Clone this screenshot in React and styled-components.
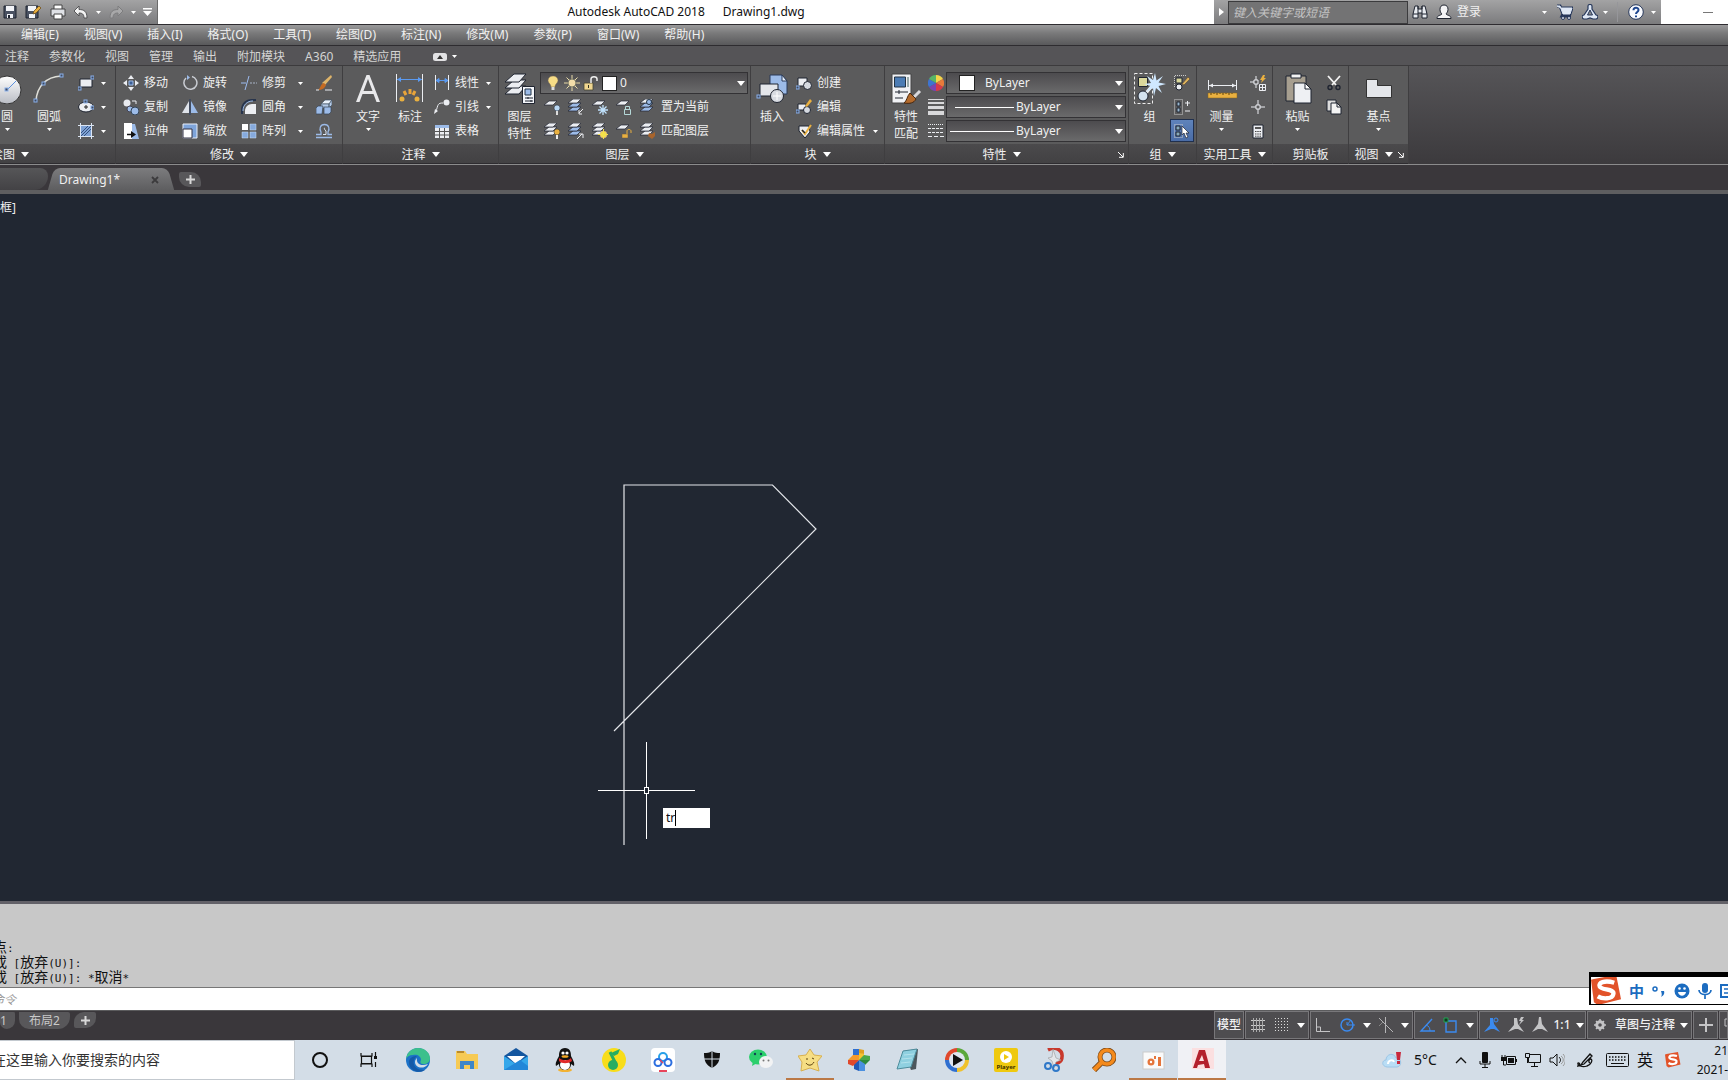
import React, { useState } from 'react';
import styled, { createGlobalStyle, css } from 'styled-components';

const GlobalStyle = createGlobalStyle`
  * { box-sizing: border-box; }
  body {
    margin: 0;
    overflow: hidden;
    background: #3a373b;
    font-family: "Noto Sans", "Noto Sans CJK SC", sans-serif;
    font-size: 12px;
    line-height: 16px;
    color: #f0f0f0;
  }
  button, input, select {
    font: inherit;
    color: inherit;
    margin: 0;
    padding: 0;
    border: 0;
    background: none;
    border-radius: 0;
    outline: none;
  }
  svg { display: block; flex: none; }
`;

const Shell = styled.div`
  height: 100vh;
  display: flex;
  flex-direction: column;
  overflow: hidden;
`;

/* ---------- title bar ---------- */

const TitleBar = styled.header`
  display: flex;
  height: 25px;
  flex: none;
  background: #fff;
  border-bottom: 1px solid #2e2c30;
`;
const silver = css`
  background: linear-gradient(#a3a3a4, #7b7b7d);
`;
const QuickAccess = styled.div`
  ${silver}
  width: 158px;
  display: flex;
  align-items: center;
  padding-left: 2px;
  border-right: 1px solid #6a6a6a;
`;
const QuickButton = styled.button`
  width: ${p => p.$w || 24}px;
  height: 24px;
  display: flex;
  align-items: center;
  justify-content: center;
`;
const WindowTitle = styled.h1`
  flex: 1;
  margin: 0;
  display: flex;
  justify-content: center;
  align-items: center;
  gap: 18px;
  color: #111;
  font-size: 12px;
  font-weight: 400;
`;
const InfoCenter = styled.div`
  ${silver}
  width: 447px;
  display: flex;
  align-items: center;
`;
const SearchBox = styled.input`
  width: 180px;
  height: 23px;
  padding-left: 4px;
  background: #737374;
  border: 1px solid #3b3b3d;
  font-style: italic;
  &::placeholder { color: #c4c4c4; }
`;
const SignIn = styled.button`
  flex: 1;
  display: flex;
  align-items: center;
  gap: 5px;
  padding-left: 4px;
  span { margin-right: auto; }
`;
const Divider = styled.span`
  width: 1px;
  height: 20px;
  margin: 0 9px 0 4px;
  background: #96969a;
`;
const MinimizeArea = styled.div`
  width: 67px;
  display: flex;
  align-items: center;
  justify-content: center;
  padding-left: 26px;
`;

/* ---------- menus ---------- */

const MenuBar = styled.nav`
  display: flex;
  align-items: center;
  gap: 25px;
  height: 21px;
  flex: none;
  padding-left: 21px;
  background: linear-gradient(#9a9a9b, #7a7a7b 40%, #59595b);
  border-bottom: 1px solid #2e2c30;
`;
const RibbonTabs = styled.nav`
  display: flex;
  align-items: center;
  gap: 20px;
  height: 20px;
  flex: none;
  padding: 2px 0 0 5px;
  background: #555457;
  border-bottom: 1px solid #3c3b3d;
  color: #d4d4d4;
`;
const TabToggle = styled.button`
  display: flex;
  align-items: center;
  gap: 5px;
  margin-left: 12px;
`;

/* ---------- ribbon ---------- */

const Ribbon = styled.section`
  display: flex;
  height: 99px;
  flex: none;
  background: linear-gradient(#565558, #3c3a3d);
  border-bottom: 1px solid #8b8b8c;
`;
const PanelBox = styled.section`
  width: ${p => p.$w}px;
  flex: none;
  display: flex;
  flex-direction: column;
  overflow: hidden;
  border-right: 1px solid #3f3e40;
  background: #5b5b5c;
`;
const PanelBody = styled.div`
  display: flex;
  height: 78px;
  flex: none;
  padding: 5px ${p => p.$pr || 0}px 0 ${p => p.$pl || 0}px;
  justify-content: ${p => (p.$end ? 'flex-end' : 'flex-start')};
`;
const PanelTitle = styled.div`
  display: flex;
  align-items: center;
  height: 20px;
  padding-top: 2px;
  background: linear-gradient(#4b4a4c, #424143);
  border-bottom: 1px solid #2e2c30;
`;
const TitleButton = styled.button`
  flex: 1;
  min-width: 0;
  display: flex;
  align-items: center;
  justify-content: ${p => (p.$end ? 'flex-end' : 'center')};
  gap: 6px;
  padding-right: ${p => (p.$end ? 86 : 0)}px;
  white-space: nowrap;
`;
const Launcher = styled.button`
  width: 10px;
  height: 16px;
`;
const BigBox = styled.button`
  width: ${p => p.$w || 42}px;
  height: 72px;
  flex: none;
  display: flex;
  flex-direction: column;
  align-items: center;
  padding-top: 1px;
  svg:first-child { margin-bottom: 4px; }
  span { line-height: 17px; }
  svg:last-child { margin-top: 3px; }
`;
const ToolGrid = styled.div`
  display: grid;
  grid-template-columns: ${p => p.$cols};
  grid-auto-rows: 24px;
  margin-left: ${p => p.$ml || 0}px;
`;
const ToolBox = styled.button`
  display: flex;
  align-items: center;
  gap: 5px;
  white-space: nowrap;
  svg:nth-last-child(1):not(:first-child) { margin-left: auto; }
`;
const IconBox = styled.button`
  width: 24px;
  height: ${p => (p.$on ? 23 : 24)}px;
  display: flex;
  align-items: center;
  justify-content: center;
  ${p => p.$on && css`
    background: linear-gradient(#5f83bb, #4a6ca6);
    border: 1px solid #20304e;
  `}
`;
const Stack = styled.div`
  width: ${p => p.$w}px;
  flex: none;
  display: flex;
  flex-direction: column;
`;
const LayerRow = styled.div`
  display: flex;
  align-items: center;
  height: 24px;
  gap: 8px;
  padding-left: 4px;
`;
const Combo = styled.label`
  display: flex;
  align-items: center;
  gap: ${p => p.$gap || 4}px;
  height: 22px;
  margin: 1px 0;
  padding: 0 2px 0 ${p => p.$pl || 8}px;
  background: linear-gradient(#4c4b4e, #6a6a6b);
  border: 1px solid #333235;
  select {
    flex: 1;
    min-width: 0;
    appearance: none;
  }
  option { color: #111; }
`;
const Swatch = styled.span`
  width: ${p => p.$s}px;
  height: ${p => p.$s}px;
  margin-right: ${p => p.$mr || 0}px;
  background: #fff;
  border: 1px solid #222;
`;
const LineSample = styled.span`
  width: ${p => p.$w}px;
  height: 1px;
  background: #fff;
`;

/* ---------- drawing files + canvas ---------- */

const FileTabs = styled.nav`
  display: flex;
  align-items: flex-end;
  height: 29px;
  flex: none;
  background: #3a373b;
  border-bottom: 4px solid #5e5e60;
`;
const PlainTab = styled.div`
  width: 48px;
  height: 22px;
  background: linear-gradient(#565658, #434245);
  border-radius: 0 8px 14px 0;
`;
const FileTab = styled.div`
  position: relative;
  z-index: 0;
  width: 127px;
  height: 22px;
  display: flex;
  align-items: center;
  justify-content: space-between;
  padding: 2px 16px 0 11px;
  &::before, &::after {
    content: "";
    position: absolute;
    z-index: -1;
    top: 0;
    bottom: 0;
    background: linear-gradient(#7c7c7e, #5e5e60);
  }
  &::before { left: 3px; right: 30px; transform: skewX(-16deg); border-radius: 6px 0 0 0; }
  &::after { right: 4px; left: 30px; transform: skewX(16deg); border-radius: 0 6px 0 0; }
`;
const AddTab = styled.button`
  width: 22px;
  height: ${p => p.$h || 15}px;
  margin: ${p => p.$m || '0'};
  display: flex;
  align-items: center;
  justify-content: center;
  background: #58575a;
  border-radius: ${p => p.$r};
`;
const Canvas = styled.main`
  position: relative;
  flex: 1;
  min-height: 0;
  background: #212732;
  overflow: hidden;
`;
const ViewLabel = styled.button`
  position: absolute;
  top: 6px;
  left: 0;
`;
const Drawing = styled.svg`
  width: 100%;
  height: 100%;
`;
const DynamicInput = styled.label`
  position: absolute;
  left: 663px;
  top: 614px;
  width: 47px;
  height: 20px;
  display: flex;
  align-items: center;
  padding-left: 3px;
  background: #fff;
  color: #111;
  input { width: 9px; }
`;
const Caret = styled.span`
  width: 1px;
  height: 16px;
  background: #000;
`;

/* ---------- command line ---------- */

const CommandArea = styled.section`
  flex: none;
  border-top: 3px solid #626168;
  background: #c8c8c8;
  color: #111;
  overflow: hidden;
`;
const History = styled.div`
  height: 83px;
  display: flex;
  flex-direction: column;
  justify-content: flex-end;
  padding-bottom: 2px;
  margin-left: -7px;
  font-family: "DejaVu Sans Mono", "Noto Sans CJK SC", monospace;
  font-size: 11px;
  line-height: 15px;
  p { margin: 0; height: 15px; white-space: pre; }
  b { font-size: 14px; font-weight: 400; }
`;
const CommandInput = styled.input`
  display: block;
  width: 100%;
  height: 23px;
  margin-left: -8px;
  background: #fff;
  border-top: 1px solid #777;
  box-shadow: 8px 0 0 #fff;
  font-style: italic;
  &::placeholder { color: #999; }
`;
const ImeBar = styled.div`
  position: absolute;
  right: 0;
  bottom: 75px;
  width: 139px;
  height: 33px;
  display: flex;
  align-items: center;
  gap: 7px;
  overflow: hidden;
  background: #fff;
  border: solid #000;
  border-width: 5px 0 1px 2px;
  color: #1c6cc0;
  button { flex: none; }
`;
const ImeMode = styled.button`
  font-size: 15px;
  font-weight: 700;
`;

/* ---------- status bar ---------- */

const StatusBar = styled.footer`
  display: flex;
  justify-content: space-between;
  height: 30px;
  flex: none;
  background: #3a373b;
  border-top: 1px solid #5b5b5d;
`;
const LayoutTabs = styled.nav`
  display: flex;
  padding-top: 1px;
  color: #c9c9c9;
`;
const LayoutTab = styled.button`
  width: ${p => p.$w}px;
  height: 17px;
  margin-right: 4px;
  text-align: ${p => p.$align || 'center'};
  background: #58575a;
  border-radius: 0 2px 12px 10px;
`;
const StatusTools = styled.div`
  display: flex;
  gap: 1px;
  height: 28px;
`;
const StatusGroup = styled.div`
  display: flex;
  align-items: center;
  width: ${p => p.$w}px;
  background: #4e4d50;
  border: 1px solid #78777a;
  overflow: hidden;
`;
const StatusButton = styled.button`
  width: ${p => p.$w || 24}px;
  height: 25px;
  flex: none;
  display: flex;
  align-items: center;
  justify-content: center;
  gap: 5px;
  white-space: nowrap;
  font-weight: ${p => (p.$strong ? 500 : 400)};
`;

/* ---------- windows taskbar ---------- */

const Taskbar = styled.footer`
  display: flex;
  height: 40px;
  flex: none;
  background: #d3dde7;
  color: #111;
`;
const TaskSearch = styled.input`
  width: 303px;
  margin-left: -8px;
  background: #fff;
  border: 1px solid #c3c9cf;
  border-left: 0;
  font-size: 14px;
  &::placeholder { color: #333; }
`;
const TaskApps = styled.div`
  display: flex;
  flex: 1;
  gap: 1px;
  padding-left: 1px;
`;
const TaskApp = styled.button`
  width: 48px;
  height: 40px;
  padding-top: ${p => (p.$open ? 2 : 0)}px;
  display: flex;
  align-items: center;
  justify-content: center;
  background: ${p => (p.$active ? '#f0f1f5' : 'none')};
  border-bottom: ${p => (p.$open ? '2px solid #bb7845' : '0')};
`;
const Tray = styled.div`
  display: flex;
  align-items: center;
`;
const Weather = styled.button`
  display: flex;
  align-items: center;
  gap: 10px;
  width: 67px;
  font-size: 14px;
`;
const TrayButton = styled.button`
  width: ${p => p.$w || 24}px;
  height: 40px;
  display: flex;
  align-items: center;
  justify-content: center;
  font-size: 16px;
`;
const Clock = styled.time`
  width: 40px;
  font-size: 12px;
  line-height: 19px;
  text-align: right;
  span { display: block; }
`;

/* ---------- icons ---------- */

const W = '#eceef2';
const B = '#9cbbe8';
const K = '#1f2430';
const Y = '#e9b040';

const S = ({ s = 16, w, h, box, children, ...rest }) => (
  <svg width={w || s} height={h || s} viewBox={box || `0 0 ${w || s} ${h || s}`} fill="none" aria-hidden="true" {...rest}>
    {children}
  </svg>
);

const Down = ({ big }) => (big
  ? <S w={8} h={5}><path d="M0 0h8L4 5z" fill="#fff" /></S>
  : <S w={5} h={3}><path d="M0 0h5L2.500 3z" fill="#fff" /></S>);

const Plus = () => <S s={9}><path d="M4.500 0v9M0 4.500h9" stroke="#d8d8d8" strokeWidth="2" /></S>;

const Grip = ({ x, y }) => <rect x={x} y={y} width="3" height="3" fill="#3f4a60" stroke="#8ab0ea" />;

const LayerIcon = ({ n = 3, blue, children }) => (
  <S>
    {(n === 3 ? [8, 4, 0] : [2]).map((y, i) => (
      <path key={y} d={`M5 ${y}h8l-4 4H0z`} fill={blue && i < 2 ? B : W} stroke={K} strokeWidth=".7" />
    ))}
    {children}
  </S>
);

const icons = {
  /* quick access */
  save: <S><path d="M2 2h12v12H2z" fill="#4a5262" stroke={K} /><path d="M4 2h8v5H4zM5 10h6v4H5z" fill="#f2f4f8" /><path d="M6 11h2v3H6z" fill={K} /></S>,
  saveAs: <S><path d="M1 2h12v12H1z" fill="#4a5262" stroke={K} /><path d="M3 2h8v5H3zM4 10h6v4H4z" fill="#f2f4f8" /><path d="M8 10l1-3 5-5 2 2-5 5z" fill={Y} stroke="#70501c" strokeWidth=".8" /></S>,
  print: <S><path d="M4 1h8v5H4z" fill="#fff" stroke="#444" /><path d="M1 5h14v7H1z" fill="#dfe1e6" stroke="#444" /><path d="M4 10h8v5H4z" fill="#fff" stroke="#444" /></S>,
  undo: <S><path d="M6 2v3.500c5 0 8 2 8 8.500h-3c0-4-2-5-5-5v3L1 7z" fill="#f3f3f3" stroke="#4b4b4d" strokeWidth=".9" /></S>,
  redo: <S><path d="M10 2v3.500c-5 0-8 2-8 8.500h3c0-4 2-5 5-5v3l5-5z" fill="#a8a8a9" stroke="#7c7c7e" /></S>,
  more: <S w={9} h={8}><path d="M0 0h9v1.500H0zM0 3h9L4.500 8z" fill="#fff" /></S>,
  play: <S w={5} h={8}><path d="M0 0v8l5-4z" fill="#fff" /></S>,
  binoculars: <S><path d="M3 2h3v3h4V2h3l2 8v4h-5V9H6v5H1v-4z" fill="#e8ebf0" stroke={K} /><path d="M6 2v7M10 2v7M1 10h5M10 10h5" stroke={K} /></S>,
  user: <S><path d="M8 1c3 0 4 2 4 4.500S10.500 9 10 10c1 1.500 5 1 5 4.500H1C1 11 5 11.500 6 10 5 9 4 8 4 5.500S5 1 8 1z" fill="#f3f3f5" stroke={K} /></S>,
  cart: <S><path d="M0 2h3l3 8h7l2-6H4M6 10l-1 2h9" stroke="#26375a" strokeWidth="3" /><path d="M0 2h3l3 8h7l2-6H4z" fill="#dfe8f5" stroke="#dfe8f5" /><circle cx="6" cy="14" r="1.500" fill="#dfe8f5" stroke="#26375a" /><circle cx="12" cy="14" r="1.500" fill="#dfe8f5" stroke="#26375a" /></S>,
  exchange: <S><path d="M6 2c0-2 4-2 4 0v3l4 6c3 0 2 4 0 4h-3l-3-1-3 1H2c-2 0-3-4 0-4l4-6z" fill="#dfe8f5" stroke="#26375a" strokeWidth="1.200" /><path d="M8 6l2.500 5h-5z" fill="#888" stroke="#26375a" /></S>,
  help: <S><circle cx="8" cy="8" r="7.300" fill="#fbfcff" stroke="#26375a" /><path d="M5.500 6.200C5.500 3 10.500 3 10.500 6c0 2-2.500 2-2.500 4M8 11.500v1.800" stroke="#1e4690" strokeWidth="2" /></S>,
  tabs: <S w={14} h={8}><rect width="14" height="8" rx="2.500" fill="#e2e2e4" /><path d="M7 2l3 4H4z" fill="#333" /></S>,

  /* big ribbon icons */
  circle: <S s={32}><circle cx="16" cy="18" r="14" fill="url(#sphere)" stroke="#333" /><path d="M16 18l9-9" stroke="#5b8fdc" /><Grip x="14" y="16" /></S>,
  arc: <S s={32}><path d="M3 29C4 14 13 5 28 4" stroke="#dfdfd8" strokeWidth="1.500" /><Grip x="1" y="27" /><Grip x="9" y="10" /><Grip x="27" y="2" /></S>,
  text: <S s={32}><path d="M4 30L14.500 3h3L28 30h-3.500l-3-8h-11l-3 8zM11.500 19h9L16 7z" fill="#e9e9eb" /></S>,
  dim: <S s={32}><path d="M2.500 2v28M28.500 2v28" stroke={W} /><path d="M3 7.500h25" stroke="#5b9af0" /><path d="M3 7.500l4-2.500v5zM28 7.500L24 5v5z" fill="#5b9af0" /><path d="M16 17v5M10 19l2 4M21 19l-2 4" stroke="#e8a43a" strokeWidth="3" /><circle cx="8" cy="27" r="2.500" fill={Y} /><circle cx="23" cy="27" r="2.500" fill={Y} /></S>,
  layers: <S s={32}>{[14, 8, 2].map(y => <path key={y} d={`M10 ${y}h12l-7 8H1z`} fill={W} stroke={K} />)}<path d="M18.500 14.500h12v17h-12z" fill="#f4f6fa" stroke={K} /><path d="M21 17h6v6h-6z" fill={B} stroke="#234" /><path d="M21 26h8M21 29h8M24 25v2M27 28v2" stroke={K} /></S>,
  insert: <S s={32}><path d="M14 3h12l5 6v13H14z" fill={B} stroke="#2b3b58" /><path d="M26 3v6h5z" fill="#e6effb" stroke="#2b3b58" /><path d="M4 12h18v12H4z" fill="#e4e6ea" stroke={K} /><circle cx="21" cy="24" r="6.500" fill="#d9dce2" stroke={K} /><path d="M17 24h8M21 20v8" stroke="#fff" /><Grip x="1" y="23" /></S>,
  match: <S s={32}><path d="M2 2h19v29H2z" fill="#f1f2f5" stroke="#444" /><path d="M4.500 5h11v10h-11z" fill="#4c7cb4" stroke="#234" /><path d="M17 5h2v10h-2z" fill="#9aa" /><path d="M5 20h13M5 26h8M9 18v4" stroke={K} /><path d="M30 19l-6 6" stroke="#d9d9dc" strokeWidth="3" /><path d="M20 21l6 6c-2 4-6 5-12 4 3-2 3-7 6-10z" fill="#b36a2c" stroke="#4b2a10" /></S>,
  group: <S s={32}><path d="M.5 1.500h18v30H.5z" stroke="#eee" strokeDasharray="3 2" /><path d="M4.500 5.500h9v9h-9z" fill="#dad79a" stroke={K} /><path d="M12 21l6-7" stroke="#eee" strokeWidth="3" /><circle cx="9" cy="24" r="5" fill="#d4e2ee" stroke={K} /><path d="M21 1l1.500 7.500L29 4l-4.500 6.500L32 12l-7.500 2 3.500 7-6-5-2 8-1-8-7 4 4.500-6L10 12l7-1-4-7 6 4z" fill="#cfe8ff" /></S>,
  measure: <S s={32}><path d="M2.500 8v10M30.500 8v10M3 13.500h28" stroke={W} /><path d="M3 13.500l4-2v4zM30 13.500l-4-2v4z" fill={W} /><path d="M2 21h29v5H2z" fill={Y} stroke="#8a6418" strokeWidth=".5" /><path d="M5 21v2M8 21v1M11 21v2M14 21v1M17 21v2M20 21v1M23 21v2M26 21v1" stroke="#604410" /></S>,
  paste: <S s={32}><path d="M4 4h20v25H4z" fill="#a79f90" stroke={K} /><path d="M9 2h10v4H9z" fill="#f3f3f3" stroke={K} /><path d="M12 11h11l6 6v14H12z" fill="#eef0f3" stroke={K} /><path d="M23 11v6h6z" fill="#fff" stroke={K} /></S>,
  base: <S s={32}><path d="M3.500 7.500h11v6h14v12h-25z" fill="#e4e6ea" stroke="#333" /></S>,

  /* small ribbon icons */
  rect: <S><path d="M2 4h12v8H2z" fill={W} stroke={K} /><Grip x="0" y="12" /><Grip x="13" y="1" /></S>,
  ellipse: <S><ellipse cx="8" cy="8" rx="7.500" ry="5" fill={W} stroke={K} /><path d="M8 6v4M6 8h4" stroke="#222" /><Grip x="6" y="1" /><Grip x="13" y="7" /></S>,
  hatch: <S><path d="M3 3h10v10H3z" fill="#7ea2d6" /><path d="M3 10l7-7M3 13L13 3M6 13l7-7" stroke="#34507c" /><path d="M2.500 0v16M13.500 0v16M0 2.500h16M0 13.500h16" stroke="#dce6f4" /></S>,
  move: <S><path d="M8 0l3 4H5zM8 16l3-4H5zM0 8l4-3v6zM16 8l-4-3v6z" fill={W} /><path d="M6 6h4v4H6z" fill="#3d5f95" stroke={B} /></S>,
  rotate: <S><path d="M4 3a6.500 6.500 0 1 0 6-1.500" stroke="#c9ccd2" strokeWidth="1.500" /><path d="M5 0v5l3-2.500z" fill={B} /></S>,
  trim: <S><path d="M0 8h5M8 1L4 15" stroke="#9dbcf0" /><path d="M9 8h7" stroke="#a9b4c6" strokeDasharray="2 1" /></S>,
  erase: <S><path d="M15 0l1 2-7 8-3-2z" fill="#dfb56a" /><path d="M8 8l2 2c-1 3-4 5-8 5 3-2 2-6 6-7z" fill="#c46a22" /><path d="M0 15h3M9 15h7" stroke={W} /></S>,
  copy: <S><circle cx="4" cy="4" r="3.500" fill="#e8eaef" /><circle cx="7" cy="10" r="3" fill={B} stroke="#445" /><circle cx="12" cy="12" r="4" fill={B} stroke="#345" /><path d="M9 2h4v3" stroke={W} /></S>,
  mirror: <S><path d="M7 2v12H0z" fill="#dfe3ea" /><path d="M9 2v12h7z" fill={B} /><path d="M8 0v16" stroke="#2b3f63" /></S>,
  fillet: <S><path d="M4 15V12c0-4 3-7 7-7h4v10z" fill={W} /><path d="M1 15v-4C1 5 5 1 11 1h4" stroke="#27344c" strokeWidth="2" /><path d="M2 12C2 6 6 2 12 2" stroke={B} /></S>,
  explode: <S><path d="M5 5l4-4h7l-3 4z" fill="#e8f0fa" stroke="#456" strokeWidth=".7" /><path d="M5 5h8v4H5zM13 5l3-4v5l-3 3z" fill="#b5cbe8" stroke="#456" strokeWidth=".7" /><path d="M0 9l2-2h5l-1 8H0zM8 8h7v5l-2 2H8z" fill={B} stroke="#345" strokeWidth=".7" /></S>,
  stretch: <S><path d="M1 0h8v16H1z" fill="#fff" /><path d="M9 1h3l4 15H9z" fill={B} /><path d="M4 11.500h6" stroke="#111" strokeWidth="1.500" /><path d="M8 8l5 3.500L8 15z" fill="#111" /></S>,
  scale: <S><path d="M1 1h14v14H1z" fill="#7ea4da" stroke="#e8eef8" /><path d="M1 6h9v9H1z" fill="#fff" stroke="#334" /></S>,
  array: <S><path d="M1 1h6v6H1z" fill="#fff" /><path d="M9 1h6v6H9zM1 9h6v6H1zM9 9h6v6H9z" fill="#86aadd" stroke="#cfe0f6" strokeWidth=".5" /></S>,
  offset: <S><path d="M0 14.500h16M0 11.500h5V9C3 6 4 1.500 8.500 1.500S14 6 12 9v2.500h4" stroke={B} strokeWidth="1.300" /><path d="M7 11.500h3V8C8 6 8 5 9 5" stroke="#dce6f4" /></S>,
  linear: <S><path d="M1.500 0v15M14.500 0v15" stroke={W} /><path d="M2 5.500h12M5 3.500l-3 2 3 2zM11 3.500l3 2-3 2z" stroke="#5b9af0" fill="#5b9af0" /></S>,
  leader: <S><path d="M2 13C4 5 4 4 9 4" stroke={W} /><path d="M0 15l1-5 3 2z" fill={W} /><circle cx="12.500" cy="3.500" r="3" fill={W} /></S>,
  table: <S><path d="M1 2h14v13H1z" fill={W} /><path d="M1 2h14v3H1z" fill={B} /><path d="M1 8.500h14M1 12h14M5.500 5v10M10.500 5v10" stroke="#555" /></S>,
  bulb: <S><path d="M8 1c3 0 5 2 5 4.500S10 9 10 12H6c0-3-3-4-3-6.500S5 1 8 1z" fill="#f6dc86" stroke="#765" strokeWidth=".5" /><path d="M6.500 12h3v3h-3z" fill="#ddd" /></S>,
  sun: <S><path d="M8 0v16M0 8h16M2.500 2.500l11 11M13.500 2.500l-11 11" stroke="#e9dba8" /><circle cx="8" cy="8" r="4" fill="#f2ddaa" stroke="#776" /></S>,
  lock: <S><path d="M1 8h9v7H1z" fill="#f0d690" stroke="#443" strokeWidth=".8" /><path d="M8 8V4c0-3 6-3 6 0v2" stroke="#eee" strokeWidth="1.500" /><path d="M5.500 10v3" stroke="#332" /></S>,
  layOff: <LayerIcon n={1}><circle cx="13" cy="9" r="3" fill="#b9d7f4" stroke={K} strokeWidth=".5" /><path d="M13 12v4" stroke="#ddd" strokeWidth="2" /></LayerIcon>,
  layIso: <LayerIcon blue><path d="M15 10l-4 4M11 11v4h3" stroke={W} /></LayerIcon>,
  layFreeze: <LayerIcon n={1}><path d="M11 6v10M6 11h10M7.500 7.500l7 7M14.500 7.500l-7 7" stroke="#bfe0fb" strokeWidth="1.300" /></LayerIcon>,
  layLock: <LayerIcon n={1}><path d="M8.500 10.500h6v5h-6z" fill="#5b5b5c" stroke="#b5d8d8" /><path d="M9.500 10V7.500h4V10" stroke="#b5d8d8" /></LayerIcon>,
  layCurrent: <LayerIcon blue><circle cx="9" cy="3" r="2.500" fill={B} stroke="#234" /></LayerIcon>,
  layOn: <LayerIcon><circle cx="13" cy="9" r="3" fill={Y} stroke={K} strokeWidth=".5" /><path d="M13 12v4" stroke="#eee" strokeWidth="2" /></LayerIcon>,
  layUniso: <LayerIcon blue><path d="M9 16l5-5M11 11h4v4" stroke={W} /></LayerIcon>,
  layThaw: <LayerIcon><circle cx="11.500" cy="11.500" r="3.500" fill="#f4e04a" stroke="#c99" strokeWidth=".5" /><path d="M11.500 6v10M6 11.500h10" stroke="#f4e04a" /></LayerIcon>,
  layUnlock: <LayerIcon n={1}><path d="M6 11h6v4H6z" fill={Y} stroke="#654" strokeWidth=".5" /><path d="M11 11V8c0-2 4-2 4 0v2" stroke={Y} /></LayerIcon>,
  layMatch: <LayerIcon><path d="M9 10l3 1 3-2v4l-3 3-4-3z" fill="#a8642c" /></LayerIcon>,
  create: <S><path d="M2 3h9v8H2z" fill={W} stroke={K} /><circle cx="11.500" cy="10.500" r="4" fill="#d5d9e0" stroke={K} /><Grip x="0" y="11" /></S>,
  edit: <S><path d="M2 5h8v6H2z" fill={W} stroke={K} /><circle cx="11" cy="11" r="3.500" fill="#d5d9e0" stroke={K} /><path d="M9 7l5-7 2 2-5 6z" fill={Y} /><Grip x="0" y="11" /></S>,
  attr: <S><path d="M3 3h10l1 6-5 6-6-7z" fill={W} stroke={K} /><path d="M6 7l3 4 6-9" stroke={Y} strokeWidth="2" /><path d="M6 7l3 3" stroke={K} strokeWidth="1.500" /></S>,
  wheel: <S><path d="M8 8V0a8 8 0 0 1 7 4z" fill="#f4d54a" /><path d="M8 8l7-4a8 8 0 0 1 0 8z" fill="#e87a3a" /><path d="M8 8l7 4a8 8 0 0 1-7 4z" fill="#d8394a" /><path d="M8 8v8a8 8 0 0 1-7-4z" fill="#7a45b0" /><path d="M8 8l-7 4a8 8 0 0 1 0-8z" fill="#3e74d0" /><path d="M8 8L1 4a8 8 0 0 1 7-4z" fill="#57b566" /></S>,
  weight: <S><path d="M0 0h16v1H0zM0 3h16v2H0zM0 7h16v3H0zM0 12h16v4H0z" fill="#d9d9db" /></S>,
  ltype: <S><path d="M0 1.500h16" stroke={W} strokeDasharray="1 1" /><path d="M0 5.500h16M0 9.500h16" stroke={W} strokeDasharray="3 1" /><path d="M0 13.500h16" stroke={W} strokeDasharray="4 2" /></S>,
  groupEdit: <S><path d="M1 .5h11M.5 1v12" stroke="#ccc" strokeDasharray="1 1" /><path d="M2 3h6v5H2z" fill="#dad79a" stroke={K} /><circle cx="5" cy="12" r="3" fill={W} stroke={K} /><path d="M8 9l6-7 2 2-6 6z" fill="#dcb25c" stroke="#543" strokeWidth=".6" /></S>,
  ungroup: <S><path d="M.5 .5h8v15h-8z" stroke="#ccc" strokeDasharray="1 1" /><path d="M3 3h3v4H3zM3 9h3v4H3z" fill="#9ab8d0" stroke={K} /><path d="M11 4h5M13.500 2v5M11 12h5" stroke={W} /></S>,
  groupSel: <S><path d="M.5 1.500h8v13h-8z" stroke="#ccc" strokeDasharray="1 1" /><path d="M2 3h4v4H2zM2 9h4v4H2z" fill="#8ab" stroke={K} /><path d="M8 3v9l2-2 2 5 2-1-2-4h3z" fill="#fff" stroke={K} strokeWidth=".7" /></S>,
  quick: <S><path d="M0 7h4M6 1v4M6 9v4M4 5h4v4H4z" stroke={W} /><path d="M9.500 9.500h6v6h-6zM9.500 12.500h6M12.500 9.500v6" stroke={W} /><path d="M13 0l-3 5h2l-1 3 5-5h-2l1-3z" fill={Y} /></S>,
  point: <S><path d="M8 1v14M1 8h14" stroke={W} /><path d="M6 6h4v4H6z" fill="#5b5b5c" stroke={W} /></S>,
  calc: <S><path d="M3 2h10v13H3z" fill={W} stroke={K} /><path d="M5 4h6v2H5z" fill="#555" /><path d="M5 8.500h6M5 11h6M5 13.200h6" stroke="#444" strokeDasharray="1.500 .75" /></S>,
  cut: <S><path d="M2 1l8 9M14 1L6 10" stroke="#f4f4f4" strokeWidth="1.800" /><circle cx="4" cy="12.500" r="2" stroke={K} strokeWidth="1.400" /><circle cx="12" cy="12.500" r="2" stroke={K} strokeWidth="1.400" /></S>,
  copyClip: <S><path d="M1 1h9v11H1z" fill="#ddd" stroke={K} /><path d="M5 4h6l4 4v7H5z" fill="#f3f3f3" stroke={K} /><path d="M11 4v4h4" stroke={K} /></S>,
  launch: <S w={6} h={6}><path d="M0 0l5 5M5.300 1v4.300H1" stroke="#fff" /></S>,

  /* status bar */
  grid: <S><path d="M3.500 1v14M6.500 1v14M9.500 1v14M12.500 1v14" stroke="#aaa" /><path d="M1 3.500h14M1 8.500h14M1 12.500h14" stroke="#ccc" strokeDasharray="2 1" /></S>,
  dots: <S><path d="M1 1.500h15M1 4.500h15M1 7.500h15M1 10.500h15M1 13.500h15" stroke="#ddd" strokeDasharray="1 2" /></S>,
  ortho: <S><path d="M1.500 1v13.500H15M5.500 14v-4H2" stroke="#c4c4c6" /></S>,
  polar: <S><circle cx="8" cy="8" r="6" stroke="#3b8bf0" strokeWidth="1.500" /><path d="M8 8h8M8 8l4-5M8 5v3" stroke="#3b8bf0" /></S>,
  iso: <S><path d="M1 1l14 14M7.500 0v16" stroke="#b5b5b7" /><path d="M1 9l4-4" stroke="#888" /></S>,
  track: <S><path d="M13 2L2 14h14" stroke="#3b8bf0" strokeWidth="1.400" /><path d="M7 8c3 1 4 3 4 6" stroke="#3b8bf0" /></S>,
  osnap: <S><path d="M3 4h10v11H3z" stroke="#3b8bf0" strokeWidth="1.400" /><path d="M1 1h4v4H1z" fill="#0d3d1c" stroke="#23a355" /></S>,
  annoOn: <S><path d="M6 1h3l1 6 6 8-6-3H7l-7 3 6-7z" fill="#3b8bf0" /><circle cx="12" cy="3" r="2" stroke="#3b8bf0" /></S>,
  annoAuto: <S><path d="M6 1h3l1 6 6 8-6-3H7l-7 3 6-7z" fill="#c4c4c6" /><path d="M13 0l-2 4h2l-2 4 5-5h-2l2-3z" fill="#c4c4c6" /></S>,
  anno: <S><path d="M7 0h2l1 7 6 8-6-3H6l-6 3 6-8z" fill="#c4c4c6" /></S>,
  gear: <S s={12}><circle cx="6" cy="6" r="3.500" stroke="#c4c4c6" strokeWidth="2.500" /><path d="M6 0v12M0 6h12M2 2l8 8M10 2l-8 8" stroke="#c4c4c6" strokeWidth="1.500" /><circle cx="6" cy="6" r="1.800" fill="#4e4d50" /></S>,
  cross: <S s={14}><path d="M7 0v14M0 7h14" stroke="#c4c4c6" strokeWidth="2" /></S>,
  monitor: <S><path d="M1 2h14v7H1zM8 9v4M3 13h10" stroke="#c4c4c6" /></S>,
};

const ImeLogo = ({ s = 31 }) => (
  <S s={s} box="0 0 32 32">
    <path d="M3 4l23-4 5 25-24 6-4-3L0 5z" fill="#e2532a" />
    <path d="M24 8C14 5 7 8 9 12s16 2 14 8c-1 5-11 5-16 2" stroke="#fff" strokeWidth="4.500" />
  </S>
);

const apps = [
  { name: 'Cortana', art: <circle cx="12" cy="12" r="7" stroke="#111" strokeWidth="2" /> },
  { name: '任务视图', art: <><path d="M4 5v3h11V5M4 19v-3h11v3M4.500 8.500h10v7h-10zM18.500 4v6M18.500 14v5" stroke="#111" strokeWidth="1.200" /><path d="M17 8h3v3h-3z" fill="#111" /></> },
  { name: 'Edge', art: <><circle cx="12" cy="12" r="12" fill="#1c72c8" /><path d="M0 11C1 4 6 0 12 0c7 0 12 5 12 10 0 4-3 6-6 6-4 0-4-2-3-4 0-4-4-6-8-5-4 0-6 2-7 4z" fill="#3cc08c" /><path d="M9 10c-4 6 1 13 10 12-8 5-17-1-16-9 1-4 5-5 8-5z" fill="#155aa8" /><path d="M11 10c-1 5 3 9 11 6-4 6-13 4-13-2 0-2 1-3 2-4z" fill="#d3dde7" /></> },
  { name: '文件资源管理器', art: <><path d="M1 3h9l2 3h11v15H1z" fill="#f6ca55" /><path d="M2 3h7v2H2z" fill="#b98a2c" /><path d="M5 13h14v8h-4v-4H9v4H5z" fill="#3f86c8" /></> },
  { name: '邮件', art: <><path d="M0 8l12-8 12 8v14H0z" fill="#14569f" /><path d="M3 8h18l-9 8z" fill="#fff" /><path d="M0 8l12 8 12-8v14H0z" fill="#35a7ea" /><path d="M0 22L16 12l8 6v4z" fill="#2387d8" /></> },
  { name: 'QQ', art: <><ellipse cx="12" cy="22" rx="7" ry="2" fill="#f2b233" /><path d="M12 0c5 0 6 4 6 8 2 4 4 7 3 10l-3-2c0 4-3 6-6 6s-6-2-6-6l-3 2c-1-3 1-6 3-10 0-4 1-8 6-8z" fill="#111" /><ellipse cx="12" cy="17" rx="5" ry="5" fill="#fff" /><path d="M6 10c4 3 9 3 12 0l1 3c-4 3-10 3-13 0z" fill="#e02a2a" /><circle cx="10" cy="5" r="1.600" fill="#fff" /><circle cx="14" cy="5" r="1.600" fill="#fff" /><ellipse cx="12" cy="8.500" rx="3.500" ry="1.300" fill="#f2a823" /></> },
  { name: 'QQ音乐', art: <><circle cx="12" cy="12" r="12" fill="#f8dd1a" /><path d="M9 5l9-4-2 5-4 2z" fill="#26ad62" /><path d="M8 4l6 12" stroke="#26ad62" strokeWidth="3" /><circle cx="11" cy="17" r="5" fill="#26ad62" /></> },
  { name: '百度网盘', art: <><rect width="24" height="24" rx="4" fill="#fff" /><circle cx="12" cy="9" r="4" stroke="#27a0e8" strokeWidth="2" /><circle cx="7" cy="14.500" r="3.500" stroke="#2c6fe0" strokeWidth="2" /><circle cx="17" cy="14.500" r="3.500" stroke="#2c6fe0" strokeWidth="2" /><path d="M9 12l3 3" stroke="#e8455c" strokeWidth="1.500" /><path d="M8 23h8" stroke="#e8455c" strokeWidth="2" /></> },
  { name: '安全中心', art: <><path d="M12 3c3 2 5 2 8 2 0 8-2 12-8 15C6 17 4 13 4 5c3 0 5 0 8-2z" fill="#111" /><path d="M12 3v17M4 11h16" stroke="#d3dde7" /></> },
  { name: '微信', art: <><ellipse cx="9" cy="9" rx="9" ry="7.500" fill="#2bcf6c" /><path d="M3 18l1-5 4 2z" fill="#2bcf6c" /><circle cx="6" cy="6" r="1.200" fill="#145" /><circle cx="12" cy="6" r="1.200" fill="#145" /><ellipse cx="17" cy="14" rx="7" ry="6" fill="#f2f3f4" /><circle cx="14.500" cy="12.500" r="1" fill="#777" /><circle cx="19.500" cy="12.500" r="1" fill="#777" /></> },
  { name: '收藏', open: true, art: <><path d="M12 1l4 6 8 1-5 6 2 9-9-3-9 3 1-9-4-6 8-1z" fill="#f6de84" stroke="#d8b04e" /><path d="M8 15c2 3 6 3 8-1M8 11h2M14 10l2 1" stroke="#5d4310" /></> },
  { name: '照片', art: <><path d="M12 12V4l5 2v6z" fill="#f4c430" /><path d="M12 12L6 9V1h6z" fill="#2f6fd0" /><path d="M12 5V1l5 1v4z" fill="#e0a020" /><path d="M12 12h11l-5 5h-6z" fill="#2e8a3c" /><path d="M12 12l5-5 6 1v4z" fill="#4aa84a" /><path d="M12 12l6 4v7h-6z" fill="#4a90e0" /><path d="M12 12v11l-5-2v-5z" fill="#1f58b8" /><path d="M12 12H1l5-5h6z" fill="#f59a2c" /><path d="M12 12l-6 6-5-2v-4z" fill="#e0482c" /></> },
  { name: '记事本', art: <><path d="M7 3l15-2-2 20-5 1z" fill="#4b565c" /><path d="M7 3l14-2-6 18-14 2z" fill="#8fd0e0" stroke="#4d8c9c" /><path d="M8 7l10-1M6 11l10-1M5 15l9-1" stroke="#b4e2ec" /></> },
  { name: '播放器', art: <><path d="M12 12L12 0A12 12 0 0 1 24 12z" fill="#5aa83c" /><path d="M12 12h12a12 12 0 0 1-12 12z" fill="#f0c22c" /><path d="M12 12v12A12 12 0 0 1 0 12z" fill="#2f6fd0" /><path d="M12 12H0A12 12 0 0 1 12 0z" fill="#e0482c" /><circle cx="12" cy="12" r="8" fill="#dfe6f0" /><path d="M8 6l10 6-10 6z" fill="#111" /></> },
  { name: 'PotPlayer', art: <><rect width="24" height="24" rx="2" fill="#efc90f" /><circle cx="12" cy="9" r="6" fill="#fff" /><path d="M10 6l5 3-5 3z" fill="#efc90f" /><text x="12" y="21" fontSize="6" fontWeight="700" textAnchor="middle" fill="#3c3000">Player</text></> },
  { name: '截图工具', art: <><path d="M5 2C13-2 20 2 19 9c0 5-5 7-8 6" stroke="#c8382c" strokeWidth="3.500" /><path d="M10 1l3 9 5 2-5 2-2 6-2-7-4-3 4-1z" fill="#e4e6ea" stroke="#999" strokeWidth=".6" /><circle cx="5" cy="18" r="3" stroke="#2f78c8" strokeWidth="2" /><circle cx="13" cy="20" r="3" stroke="#2f78c8" strokeWidth="2" /></> },
  { name: '搜索', art: <><circle cx="15" cy="9" r="7" stroke="#7a4818" strokeWidth="5" /><path d="M10 14l-8 8" stroke="#7a4818" strokeWidth="6" /><circle cx="15" cy="9" r="7" stroke="#f48a1c" strokeWidth="3.500" /><path d="M10 14l-8 8" stroke="#f48a1c" strokeWidth="4" /></> },
  { name: '录屏', open: true, art: <><rect x="2" y="4" width="21" height="17" fill="#fafafa" stroke="#ccc" /><circle cx="10" cy="14" r="3.500" fill="#e5743a" /><circle cx="10" cy="14" r="1.200" fill="#fff" /><path d="M14 8v3" stroke="#e5743a" strokeWidth="2" /><path d="M18.500 9v9" stroke="#e5743a" strokeWidth="3" /></> },
  { name: 'AutoCAD', open: true, active: true, art: <><rect x="2" width="22" height="21" fill="#fbdfe0" /><path d="M3 20L9 2h6l5 18h-5l-1-4-6 1-1 3zM9 13h5l-2-6z" fill="#b3202c" /></> },
];

/* ---------- ribbon pieces ---------- */

const Tool = ({ icon, label, menu }) => (
  <ToolBox aria-label={label || icon}>
    {icons[icon]}
    {label && <span>{label}</span>}
    {menu && <Down />}
  </ToolBox>
);

const Big = ({ icon, lines, menu, w }) => (
  <BigBox $w={w}>
    {icons[icon]}
    {lines.map(l => <span key={l}>{l}</span>)}
    {menu && <Down />}
  </BigBox>
);

const IconTool = ({ icon, on }) => <IconBox $on={on} aria-label={icon}>{icons[icon]}</IconBox>;

const Panel = ({ title, w, pl, pr, end, plain, launcher, children }) => (
  <PanelBox $w={w}>
    <PanelBody $pl={pl} $pr={pr} $end={end}>{children}</PanelBody>
    <PanelTitle>
      <TitleButton $end={end}>
        <span>{title}</span>
        {!plain && <Down big />}
      </TitleButton>
      {launcher && <Launcher aria-label="对话框">{icons.launch}</Launcher>}
    </PanelTitle>
  </PanelBox>
);

const menus = ['编辑(E)', '视图(V)', '插入(I)', '格式(O)', '工具(T)', '绘图(D)', '标注(N)', '修改(M)', '参数(P)', '窗口(W)', '帮助(H)'];
const ribbonTabs = ['注释', '参数化', '视图', '管理', '输出', '附加模块', 'A360', '精选应用'];
const history = ['点:', '或 [放弃(U)]:', '或 [放弃(U)]: *取消*'];

// CJK runs are set larger so that one ideograph spans two mono cells
const mono = line => line.split(/([\u4e00-\u9fff]+)/).map((part, i) => (i % 2 ? <b key={i}>{part}</b> : part));

function RibbonPanels() {
  return (
    <Ribbon>
      <Panel title="绘图" w={116} pr={9} end>
        <Big icon="circle" lines={['圆']} menu />
        <Big icon="arc" lines={['圆弧']} menu />
        <ToolGrid $cols="28px" $ml={8}>
          <Tool icon="rect" menu />
          <Tool icon="ellipse" menu />
          <Tool icon="hatch" menu />
        </ToolGrid>
      </Panel>

      <Panel title="修改" w={227} pl={7}>
        <ToolGrid $cols="59px 59px 62px">
          <Tool icon="move" label="移动" />
          <Tool icon="rotate" label="旋转" />
          <Tool icon="trim" label="修剪" menu />
          <Tool icon="copy" label="复制" />
          <Tool icon="mirror" label="镜像" />
          <Tool icon="fillet" label="圆角" menu />
          <Tool icon="stretch" label="拉伸" />
          <Tool icon="scale" label="缩放" />
          <Tool icon="array" label="阵列" menu />
        </ToolGrid>
        <ToolGrid $cols="16px" $ml={13}>
          <Tool icon="erase" />
          <Tool icon="explode" />
          <Tool icon="offset" />
        </ToolGrid>
      </Panel>

      <Panel title="注释" w={156} pl={4}>
        <Big icon="text" lines={['文字']} menu />
        <Big icon="dim" lines={['标注']} />
        <ToolGrid $cols="57px" $ml={3}>
          <Tool icon="linear" label="线性" menu />
          <Tool icon="leader" label="引线" menu />
          <Tool icon="table" label="表格" />
        </ToolGrid>
      </Panel>

      <Panel title="图层" w={252}>
        <Big icon="layers" lines={['图层', '特性']} w={41} />
        <Stack $w={208}>
          <Combo $pl={4} $gap={3}>
            {icons.bulb}{icons.sun}{icons.lock}
            <Swatch $s={15} />
            <select aria-label="图层"><option>0</option></select>
            <Down big />
          </Combo>
          <LayerRow>
            {['layOff', 'layIso', 'layFreeze', 'layLock'].map(i => <Tool key={i} icon={i} />)}
            <Tool icon="layCurrent" label="置为当前" />
          </LayerRow>
          <LayerRow>
            {['layOn', 'layUniso', 'layThaw', 'layUnlock'].map(i => <Tool key={i} icon={i} />)}
            <Tool icon="layMatch" label="匹配图层" />
          </LayerRow>
        </Stack>
      </Panel>

      <Panel title="块" w={134}>
        <Big icon="insert" lines={['插入']} />
        <ToolGrid $cols="82px" $ml={3}>
          <Tool icon="create" label="创建" />
          <Tool icon="edit" label="编辑" />
          <Tool icon="attr" label="编辑属性" menu />
        </ToolGrid>
      </Panel>

      <Panel title="特性" w={244} launcher>
        <Big icon="match" lines={['特性', '匹配']} />
        <ToolGrid $cols="18px" $ml={1}>
          <Tool icon="wheel" />
          <Tool icon="weight" />
          <Tool icon="ltype" />
        </ToolGrid>
        <Stack $w={180}>
          <Combo $pl={12}>
            <Swatch $s={16} $mr={6} />
            <select aria-label="颜色"><option>ByLayer</option></select>
            <Down big />
          </Combo>
          <Combo $pl={8} $gap={2}>
            <LineSample $w={59} />
            <select aria-label="线宽"><option>ByLayer</option></select>
            <Down big />
          </Combo>
          <Combo $pl={3} $gap={2}>
            <LineSample $w={64} />
            <select aria-label="线型"><option>ByLayer</option></select>
            <Down big />
          </Combo>
        </Stack>
      </Panel>

      <Panel title="组" w={68}>
        <Big icon="group" lines={['组']} w={41} />
        <ToolGrid $cols="24px">
          <IconTool icon="groupEdit" />
          <IconTool icon="ungroup" />
          <IconTool icon="groupSel" on />
        </ToolGrid>
      </Panel>

      <Panel title="实用工具" w={76}>
        <Big icon="measure" lines={['测量']} w={49} menu />
        <ToolGrid $cols="24px">
          <IconTool icon="quick" />
          <IconTool icon="point" />
          <IconTool icon="calc" />
        </ToolGrid>
      </Panel>

      <Panel title="剪贴板" w={76} plain>
        <Big icon="paste" lines={['粘贴']} w={49} menu />
        <ToolGrid $cols="24px">
          <IconTool icon="cut" />
          <IconTool icon="copyClip" />
        </ToolGrid>
      </Panel>

      <Panel title="视图" w={60} launcher>
        <Big icon="base" lines={['基点']} w={59} menu />
      </Panel>
    </Ribbon>
  );
}

function App() {
  const [command, setCommand] = useState('tr');

  return (
    <Shell>
      <GlobalStyle />
      <TitleBar>
        <QuickAccess>
          <QuickButton $w={17} aria-label="保存">{icons.save}</QuickButton>
          <QuickButton $w={30} aria-label="另存为">{icons.saveAs}</QuickButton>
          <QuickButton $w={20} aria-label="打印">{icons.print}</QuickButton>
          <QuickButton $w={27} aria-label="放弃">{icons.undo}</QuickButton>
          <QuickButton $w={8} aria-label="放弃列表"><Down /></QuickButton>
          <QuickButton $w={28} aria-label="重做">{icons.redo}</QuickButton>
          <QuickButton $w={8} aria-label="重做列表"><Down /></QuickButton>
          <QuickButton $w={20} aria-label="自定义">{icons.more}</QuickButton>
        </QuickAccess>
        <WindowTitle>
          <span>Autodesk AutoCAD 2018</span>
          <span>Drawing1.dwg</span>
        </WindowTitle>
        <InfoCenter>
          <QuickButton $w={14} aria-label="展开">{icons.play}</QuickButton>
          <SearchBox placeholder="键入关键字或短语" aria-label="搜索" />
          <QuickButton aria-label="查找">{icons.binoculars}</QuickButton>
          <SignIn>{icons.user}<span>登录</span><Down /></SignIn>
          <QuickButton $w={36} aria-label="商店">{icons.cart}</QuickButton>
          <QuickButton $w={14} aria-label="Exchange">{icons.exchange}</QuickButton>
          <QuickButton $w={16} aria-label="更多"><Down /></QuickButton>
          <Divider />
          <QuickButton $w={18} aria-label="帮助">{icons.help}</QuickButton>
          <QuickButton $w={16} aria-label="帮助列表"><Down /></QuickButton>
        </InfoCenter>
        <MinimizeArea>
          <button aria-label="最小化"><S w={10} h={1}><path d="M0 .5h10" stroke="#777" /></S></button>
        </MinimizeArea>
      </TitleBar>

      <MenuBar>
        {menus.map(m => <button key={m}>{m}</button>)}
      </MenuBar>

      <RibbonTabs>
        {ribbonTabs.map(t => <button key={t}>{t}</button>)}
        <TabToggle aria-label="功能区">{icons.tabs}<Down /></TabToggle>
      </RibbonTabs>

      <RibbonPanels />

      <FileTabs>
        <PlainTab />
        <FileTab>
          <span>Drawing1*</span>
          <button aria-label="关闭"><S s={8}><path d="M1 1l6 6M7 1L1 7" stroke="#3c3b3d" strokeWidth="1.800" /></S></button>
        </FileTab>
        <AddTab aria-label="新建图形" $m="0 0 3px 4px" $r="2px 10px 2px 10px"><Plus /></AddTab>
      </FileTabs>

      <Canvas>
        <ViewLabel>框]</ViewLabel>
        <Drawing stroke="#e4e6ea" fill="none">
          <defs>
            <linearGradient id="sphere" x1="0" y1="0" x2="0" y2="1">
              <stop offset="0" stopColor="#fff" />
              <stop offset="1" stopColor="#b9bcc4" />
            </linearGradient>
          </defs>
          <path d="M624 651V291H772.500L816 335 614 537" strokeWidth="1.200" />
          <path d="M598 596.500h97M646.500 548v97" stroke="#fff" />
          <rect x="644.500" y="593.500" width="4" height="6" fill="#212732" stroke="#fff" />
        </Drawing>
        <DynamicInput>
          <input aria-label="动态输入" value={command} onChange={e => setCommand(e.target.value)} />
          <Caret />
        </DynamicInput>
      </Canvas>

      <CommandArea>
        <History>
          {history.map(line => <p key={line}>{mono(line)}</p>)}
        </History>
        <CommandInput placeholder="命令" aria-label="命令" />
      </CommandArea>

      <StatusBar>
        <LayoutTabs>
          <LayoutTab $w={15} $align="left">1</LayoutTab>
          <LayoutTab $w={51}>布局2</LayoutTab>
          <AddTab aria-label="新建布局" $h={16} $r="10px 2px 10px 2px"><Plus /></AddTab>
        </LayoutTabs>
        <StatusTools>
          <StatusGroup $w={30}><StatusButton $w={28} $strong>模型</StatusButton></StatusGroup>
          <StatusGroup $w={64}>
            <StatusButton aria-label="栅格">{icons.grid}</StatusButton>
            <StatusButton aria-label="捕捉">{icons.dots}</StatusButton>
            <StatusButton $w={14} aria-label="捕捉列表"><Down big /></StatusButton>
          </StatusGroup>
          <StatusGroup $w={103}>
            <StatusButton aria-label="正交">{icons.ortho}</StatusButton>
            <StatusButton aria-label="极轴">{icons.polar}</StatusButton>
            <StatusButton $w={15} aria-label="极轴列表"><Down big /></StatusButton>
            <StatusButton aria-label="等轴测">{icons.iso}</StatusButton>
            <StatusButton $w={14} aria-label="等轴测列表"><Down big /></StatusButton>
          </StatusGroup>
          <StatusGroup $w={64}>
            <StatusButton aria-label="追踪">{icons.track}</StatusButton>
            <StatusButton aria-label="对象捕捉">{icons.osnap}</StatusButton>
            <StatusButton $w={14} aria-label="对象捕捉列表"><Down big /></StatusButton>
          </StatusGroup>
          <StatusGroup $w={107}>
            <StatusButton aria-label="注释可见性">{icons.annoOn}</StatusButton>
            <StatusButton aria-label="自动缩放">{icons.annoAuto}</StatusButton>
            <StatusButton aria-label="注释比例">{icons.anno}</StatusButton>
            <StatusButton $w={33} $strong>1:1<Down big /></StatusButton>
          </StatusGroup>
          <StatusGroup $w={105}>
            <StatusButton aria-label="设置">{icons.gear}</StatusButton>
            <StatusButton $w={79} $strong>草图与注释<Down big /></StatusButton>
          </StatusGroup>
          <StatusGroup $w={25}><StatusButton $w={23} aria-label="添加">{icons.cross}</StatusButton></StatusGroup>
          <StatusGroup $w={9}><StatusButton aria-label="隔离">{icons.monitor}</StatusButton></StatusGroup>
        </StatusTools>
      </StatusBar>

      <Taskbar>
        <TaskSearch placeholder="在这里输入你要搜索的内容" aria-label="搜索内容" />
        <TaskApps>
          {apps.map(app => (
            <TaskApp key={app.name} aria-label={app.name} $open={app.open} $active={app.active}>
              <S s={24}>{app.art}</S>
            </TaskApp>
          ))}
        </TaskApps>
        <Tray>
          <Weather>
            <S w={22} h={18}>
              <path d="M5 16C-1 15 0 9 4 9c0-6 8-8 10-2 5-1 7 8 1 9z" fill="#b9ddf5" stroke="#9cc6e6" />
              <path d="M6 13c0-4 5-5 6-2" stroke="#fff" strokeWidth="2" />
              <path d="M14 1h5l-1 8h-3zM15 10h3v3h-3z" fill="#c8283c" />
            </S>
            5°C
          </Weather>
          <TrayButton aria-label="展开"><S s={12}><path d="M1 9l5-5 5 5" stroke="#111" strokeWidth="1.300" /></S></TrayButton>
          <TrayButton aria-label="麦克风"><S w={12} h={16}><rect x="3" width="6" height="11" rx="1" fill="#111" /><path d="M1 9v3h10V9M6 12v4M3 15.500h6" stroke="#111" /></S></TrayButton>
          <TrayButton aria-label="电池"><S><path d="M5.500 4.500h9v8h-9z" stroke="#111" /><path d="M7 6h6v5H7zM15 7h1v3h-1zM0 5h5v4H0z" fill="#111" /><path d="M1 3v3M4 3v3M2.500 9v4H5" stroke="#111" /></S></TrayButton>
          <TrayButton aria-label="网络"><S><path d="M3.500 2.500h12v8h-12zM9.500 11v3M6 14.500h7" stroke="#111" /><path d="M.5 1.500h4v4h-4zM2.500 6v5" fill="#d3dde7" stroke="#111" /></S></TrayButton>
          <TrayButton aria-label="音量"><S><path d="M1 6h3l4-4v12l-4-4H1z" stroke="#111" /><path d="M10 5c2 2 2 4 0 6" stroke="#111" /><path d="M12 4c3 2 3 6 0 8M14 2c3 3 3 9 0 12" stroke="#999" /></S></TrayButton>
          <TrayButton $w={32} aria-label="手写"><S><path d="M6 10l7-8 2 2-8 8-3 1zM0 14c4 1 3-4 1-3-1 2 4 5 9 3 4-1 6-6 4-7-2 0-3 3-1 4" stroke="#111" strokeWidth="1.300" /></S></TrayButton>
          <TrayButton $w={32} aria-label="触摸键盘"><S w={23} h={14}><rect x=".5" y=".5" width="22" height="13" rx="1" stroke="#111" /><path d="M3 4h18M3 7h18" stroke="#111" strokeWidth="1.500" strokeDasharray="1.500 1.500" /><path d="M5 10.500h13" stroke="#111" /></S></TrayButton>
          <TrayButton aria-label="输入法">英</TrayButton>
          <TrayButton $w={31} aria-label="搜狗输入法"><ImeLogo s={16} /></TrayButton>
          <Clock><span>21</span><span>2021-</span></Clock>
        </Tray>
      </Taskbar>

      <ImeBar>
        <button aria-label="搜狗"><ImeLogo /></button>
        <ImeMode>中</ImeMode>
        <button aria-label="标点"><S><circle cx="4" cy="6" r="2" stroke="#1c6cc0" strokeWidth="1.500" /><path d="M10 8h3c1 3-1 5-3 6 1-2 1-3 0-6z" fill="#1c6cc0" /></S></button>
        <button aria-label="表情"><S><circle cx="8" cy="8" r="7.500" fill="#1c6cc0" /><path d="M4 9h8c-1 5-7 5-8 0z" fill="#fff" /><circle cx="5.500" cy="5.500" r="1.300" fill="#fff" /><circle cx="10.500" cy="5.500" r="1.300" fill="#fff" /></S></button>
        <button aria-label="语音"><S><rect x="5" width="6" height="10" rx="3" fill="#1c6cc0" /><path d="M2 7c0 6 12 6 12 0M8 12v4" stroke="#1c6cc0" strokeWidth="1.700" /></S></button>
        <button aria-label="键盘"><S><rect x="1" y="2" width="15" height="12" stroke="#1c6cc0" strokeWidth="2" /><path d="M4 6h10M4 10h10" stroke="#1c6cc0" strokeWidth="1.500" /></S></button>
      </ImeBar>
    </Shell>
  );
}

export default App;
